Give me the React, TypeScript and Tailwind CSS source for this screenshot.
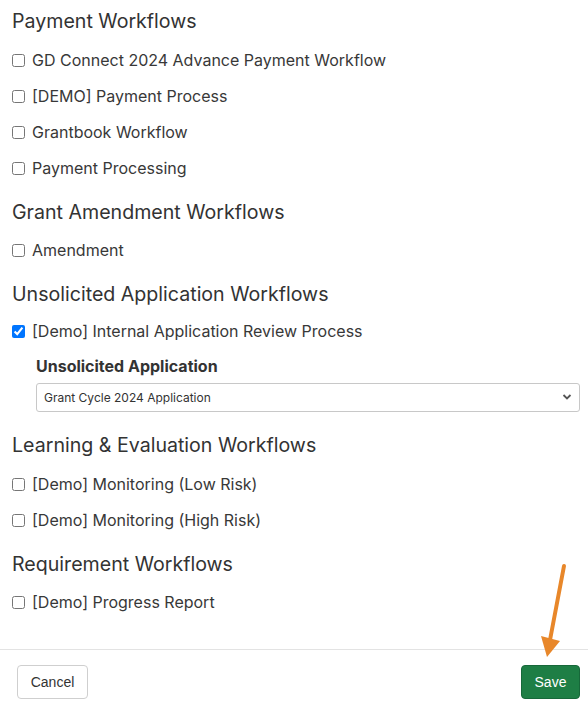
import React from "react";

function Heading({ children, className = "" }: { children: React.ReactNode; className?: string }) {
  return <h2 className={"h-7 text-[19.6px] leading-7 font-normal text-[#333] px-3 " + className}>{children}</h2>;
}

function Item({ label, checked = false }: { label: string; checked?: boolean }) {
  return (
    <label className="h-9 flex items-center pl-3 text-[16px] text-[#383838]">
      <input type="checkbox" defaultChecked={checked} className="w-[13px] h-[13px] m-0" />
      <span className="ml-[7px]">{label}</span>
    </label>
  );
}

export default function App() {
  return (
    <div className="w-[588px] h-[707px] bg-white flex flex-col" style={{ fontFamily: "Inter, 'Noto Sans', sans-serif" }}>
      <div className="flex-1 pt-[7px] relative">
        <Heading>Payment Workflows</Heading>
        <div className="mt-[7px]">
          <Item label="GD Connect 2024 Advance Payment Workflow" />
          <Item label="[DEMO] Payment Process" />
          <Item label="Grantbook Workflow" />
          <Item label="Payment Processing" />
        </div>
        <Heading className="mt-3">Grant Amendment Workflows</Heading>
        <div className="mt-1.5">
          <Item label="Amendment" />
        </div>
        <Heading className="mt-3">Unsolicited Application Workflows</Heading>
        <div className="mt-[5px]">
          <Item label="[Demo] Internal Application Review Process" checked />
        </div>
        <div className="pl-9 pr-2 mt-[5px]">
          <div className="h-6 leading-6 text-[16px] font-bold text-[#333]">Unsolicited Application</div>
          <div className="mt-[5px] relative">
            <select className="w-full h-[29px] border border-[#c8c8c8] rounded-[3px] bg-white pl-[7px] pr-6 text-[12px] text-[#333] appearance-none">
              <option>Grant Cycle 2024 Application</option>
            </select>
            <svg className="absolute right-[8px] top-[10px]" width="10" height="8" viewBox="0 0 10 8">
              <path d="M1.5 2 L5 5.5 L8.5 2" fill="none" stroke="#555" strokeWidth="1.8" />
            </svg>
          </div>
        </div>
        <Heading className="mt-[19px]">Learning &amp; Evaluation Workflows</Heading>
        <div className="mt-[7px]">
          <Item label="[Demo] Monitoring (Low Risk)" />
          <Item label="[Demo] Monitoring (High Risk)" />
        </div>
        <Heading className="mt-3">Requirement Workflows</Heading>
        <div className="mt-1.5">
          <Item label="[Demo] Progress Report" />
        </div>
        <svg className="absolute left-0 top-0 pointer-events-none" width="588" height="707" viewBox="0 0 588 707">
          <line x1="564" y1="566" x2="550" y2="640" stroke="#e8872a" strokeWidth="4" strokeLinecap="round" />
          <polygon points="541,636 560,641 547,657" fill="#e8872a" />
        </svg>
      </div>
      <div className="h-[58px] border-t border-[#e3e3e3] flex items-start justify-between pt-[15px] px-[8px] shrink-0" style={{ fontFamily: "'Liberation Sans', Arial, sans-serif" }}>
        <button className="ml-[9px] h-[34px] w-[71px] border border-[#cfcfcf] rounded-[4px] bg-white text-[14px] text-[#333]">Cancel</button>
        <button className="h-[34px] w-[59px] border border-[#17683a] rounded-[4px] bg-[#1e7e45] text-[14px] text-white">Save</button>
      </div>
    </div>
  );
}
